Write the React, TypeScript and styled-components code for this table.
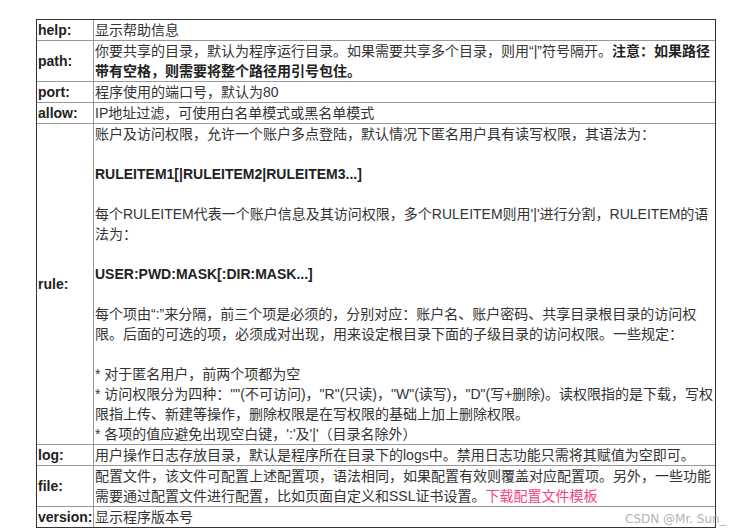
import React from "react";
import styled, { createGlobalStyle } from "styled-components";

// ======== ESTILOS ========
const GlobalStyle = createGlobalStyle`
  html, body { margin: 0; padding: 0; background: #fff; }
  body { font-family: "Liberation Sans", "Noto Sans CJK SC", sans-serif; }
`;

const Page = styled.div`
  position: relative;
  width: 735px;
  height: 532px;
  padding: 19px 0 0 36px;
  box-sizing: border-box;
  overflow: hidden;
`;

const Table = styled.table`
  width: 680px;
  border: 1px solid #333;
  border-collapse: separate;
  border-spacing: 0;
  font-size: 14px;
  line-height: 20px;
  color: #333;
`;

const Key = styled.td<{ $last?: boolean }>`
  width: 55px;
  padding: 0 0 0 1px;
  vertical-align: middle;
  font-weight: bold;
  color: #222;
  white-space: nowrap;
  border-right: 1px solid #999;
  border-bottom: ${(p) => (p.$last ? "none" : "1px solid #999")};
`;

const Value = styled.td<{ $last?: boolean }>`
  padding: 0 0 0 1px;
  vertical-align: middle;
  border-bottom: ${(p) => (p.$last ? "none" : "1px solid #999")};
`;

const B = styled.b`
  font-weight: bold;
  color: #222;
`;

const Link = styled.a`
  color: #f5437a;
  text-decoration: none;
`;

const Watermark = styled.div`
  position: absolute;
  left: 625px;
  top: 512px;
  font-size: 12px;
  line-height: 14px;
  color: #b4b4b4;
  font-family: "DejaVu Sans", sans-serif;
  white-space: nowrap;
`;

// ======== COMPONENTE ========
const App: React.FC = () => {
  return (
    <Page>
      <GlobalStyle />
      <Table>
        <tbody>
          <tr>
            <Key>help:</Key>
            <Value>显示帮助信息</Value>
          </tr>
          <tr>
            <Key>path:</Key>
            <Value>
              你要共享的目录，默认为程序运行目录。如果需要共享多个目录，则用“|”符号隔开。
              <B>注意：如果路径带有空格，则需要将整个路径用引号包住。</B>
            </Value>
          </tr>
          <tr>
            <Key>port:</Key>
            <Value>程序使用的端口号，默认为80</Value>
          </tr>
          <tr>
            <Key>allow:</Key>
            <Value>IP地址过滤，可使用白名单模式或黑名单模式</Value>
          </tr>
          <tr>
            <Key>rule:</Key>
            <Value>
              账户及访问权限，允许一个账户多点登陆，默认情况下匿名用户具有读写权限，其语法为：
              <br />
              <br />
              <B>RULEITEM1[|RULEITEM2|RULEITEM3...]</B>
              <br />
              <br />
              每个RULEITEM代表一个账户信息及其访问权限，多个RULEITEM则用'|'进行分割，RULEITEM的语法为：
              <br />
              <br />
              <B>USER:PWD:MASK[:DIR:MASK...]</B>
              <br />
              <br />
              每个项由“:”来分隔，前三个项是必须的，分别对应：账户名、账户密码、共享目录根目录的访问权限。后面的可选的项，必须成对出现，用来设定根目录下面的子级目录的访问权限。一些规定：
              <br />
              <br />
              * 对于匿名用户，前两个项都为空
              <br />
              * 访问权限分为四种：""(不可访问)，"R"(只读)，"W"(读写)，"D"(写+删除)。读权限指的是下载，写权限指上传、新建等操作，删除权限是在写权限的基础上加上删除权限。
              <br />
              * 各项的值应避免出现空白键，':'及'|'（目录名除外）
            </Value>
          </tr>
          <tr>
            <Key>log:</Key>
            <Value>用户操作日志存放目录，默认是程序所在目录下的logs中。禁用日志功能只需将其赋值为空即可。</Value>
          </tr>
          <tr>
            <Key>file:</Key>
            <Value>
              配置文件，该文件可配置上述配置项，语法相同，如果配置有效则覆盖对应配置项。另外，一些功能需要通过配置文件进行配置，比如页面自定义和SSL证书设置。
              <Link href="#">下载配置文件模板</Link>
            </Value>
          </tr>
          <tr>
            <Key $last>version:</Key>
            <Value $last>显示程序版本号</Value>
          </tr>
        </tbody>
      </Table>
      <Watermark>CSDN @Mr. Sun_</Watermark>
    </Page>
  );
};

export default App;
